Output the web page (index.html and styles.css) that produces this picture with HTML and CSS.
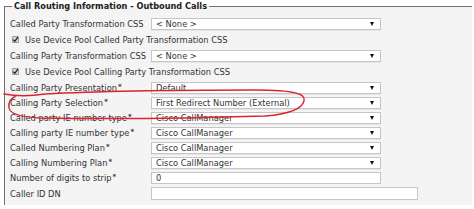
FILE: index.html
```html
<!DOCTYPE html>
<html lang="en">
<head>
<meta charset="UTF-8">
<title>Call Routing Information - Outbound Calls</title>
<link rel="stylesheet" href="styles.css">
</head>
<body>
<fieldset class="panel">
    <legend>Call Routing Information - Outbound Calls</legend>
    <div class="rows">
        <div class="row">
            <label class="lbl">Called Party Transformation CSS</label>
            <div class="select"><span>&lt; None &gt;</span><i class="arrow"></i></div>
        </div>
        <div class="row check-row">
            <span class="check"><svg width="7" height="7" viewBox="0 0 7 7"><path d="M1.2 3.6 L2.8 5.3 L5.9 1.2" fill="none" stroke="#222" stroke-width="1.3"/></svg></span>
            Use Device Pool Called Party Transformation CSS
        </div>
        <div class="row">
            <label class="lbl">Calling Party Transformation CSS</label>
            <div class="select"><span>&lt; None &gt;</span><i class="arrow"></i></div>
        </div>
        <div class="row check-row">
            <span class="check"><svg width="7" height="7" viewBox="0 0 7 7"><path d="M1.2 3.6 L2.8 5.3 L5.9 1.2" fill="none" stroke="#222" stroke-width="1.3"/></svg></span>
            Use Device Pool Calling Party Transformation CSS
        </div>
        <div class="row">
            <label class="lbl">Calling Party Presentation<span class="req">*</span></label>
            <div class="select"><span>Default</span><i class="arrow"></i></div>
        </div>
        <div class="row">
            <label class="lbl">Calling Party Selection<span class="req">*</span></label>
            <div class="select"><span>First Redirect Number (External)</span><i class="arrow"></i></div>
        </div>
        <div class="row">
            <label class="lbl">Called party IE number type<span class="req">*</span></label>
            <div class="select"><span>Cisco CallManager</span><i class="arrow"></i></div>
        </div>
        <div class="row">
            <label class="lbl">Calling party IE number type<span class="req">*</span></label>
            <div class="select"><span>Cisco CallManager</span><i class="arrow"></i></div>
        </div>
        <div class="row">
            <label class="lbl">Called Numbering Plan<span class="req">*</span></label>
            <div class="select"><span>Cisco CallManager</span><i class="arrow"></i></div>
        </div>
        <div class="row">
            <label class="lbl">Calling Numbering Plan<span class="req">*</span></label>
            <div class="select"><span>Cisco CallManager</span><i class="arrow"></i></div>
        </div>
        <div class="row">
            <label class="lbl">Number of digits to strip<span class="req">*</span></label>
            <input class="text" type="text" value="0">
        </div>
        <div class="row">
            <label class="lbl">Caller ID DN</label>
            <input class="text wide" type="text" value="">
        </div>
    </div>
</fieldset>

<!-- red pen mark drawn over the screenshot -->
<svg class="markup" width="474" height="209" viewBox="0 0 474 209">
    <path d="M4 94 C15 96, 25 97, 45 94 C100 91, 200 90, 255 90 C295 90, 306 94, 304 101 C302 109, 290 114, 265 116 C200 118, 100 119, 40 118 C20 117, 10 114, 9 108 C8 102, 11 98, 16 96" fill="none" stroke="#d9252b" stroke-width="1.4" stroke-linecap="round"/>
</svg>
</body>
</html>
```

FILE: styles.css
```css
body {
    margin: 0;
    font-family: "DejaVu Sans", Verdana, sans-serif;
    font-size: 8.3px;
    color: #333;
    background-color: #ffffff;
    position: relative;
}
.panel {
    box-sizing: border-box;
    width: 468px;
    margin: 0 0 0 4px;
    padding: 0 0 4px 5px;
    border: 0;
    border-top: 1px solid #707070;
    border-left: 1px solid #707070;
    background-color: #f4f4f4;
    min-inline-size: 0;
}
.panel legend {
    margin-left: 2px;
    padding: 0 2px;
    font-size: 8.2px;
    font-weight: bold;
    line-height: 12px;
    color: #222;
}
.rows {
    padding-top: 4px;
}
.row {
    display: flex;
    align-items: center;
    height: 15.15px;
}
.check-row {
    height: 16.85px;
    padding-left: 2px;
}
.lbl {
    width: 141px;
    flex-shrink: 0;
    white-space: nowrap;
}
.req {
    font-weight: bold;
    font-size: 7px;
    vertical-align: 2px;
    margin-left: 1px;
}
.check {
    display: inline-flex;
    box-sizing: border-box;
    width: 7px;
    height: 7px;
    margin-right: 6px;
    border: 1px solid #9a9a9a;
    border-radius: 1px;
    background-color: #d6d6d6;
    align-items: center;
    justify-content: center;
}
.check svg {
    display: block;
    margin: -1px;
}
.select {
    box-sizing: border-box;
    display: flex;
    align-items: center;
    justify-content: space-between;
    width: 230px;
    height: 12px;
    padding: 0 6px 0 4px;
    border: 1px solid #c6c6c6;
    background-color: #ffffff;
    box-shadow: 0 1px 0 #e6e6e6;
    white-space: nowrap;
}
.arrow {
    width: 0;
    height: 0;
    border-left: 2.5px solid transparent;
    border-right: 2.5px solid transparent;
    border-top: 4px solid #111;
}
.text {
    box-sizing: border-box;
    width: 230px;
    height: 12px;
    margin: 0;
    padding: 0 4px;
    border: 1px solid #c6c6c6;
    background-color: #ffffff;
    font-family: inherit;
    font-size: 8.3px;
    color: #333;
}
.text.wide {
    width: 267px;
    height: 13px;
}
.markup {
    position: absolute;
    top: 0;
    left: 0;
    pointer-events: none;
}
```
